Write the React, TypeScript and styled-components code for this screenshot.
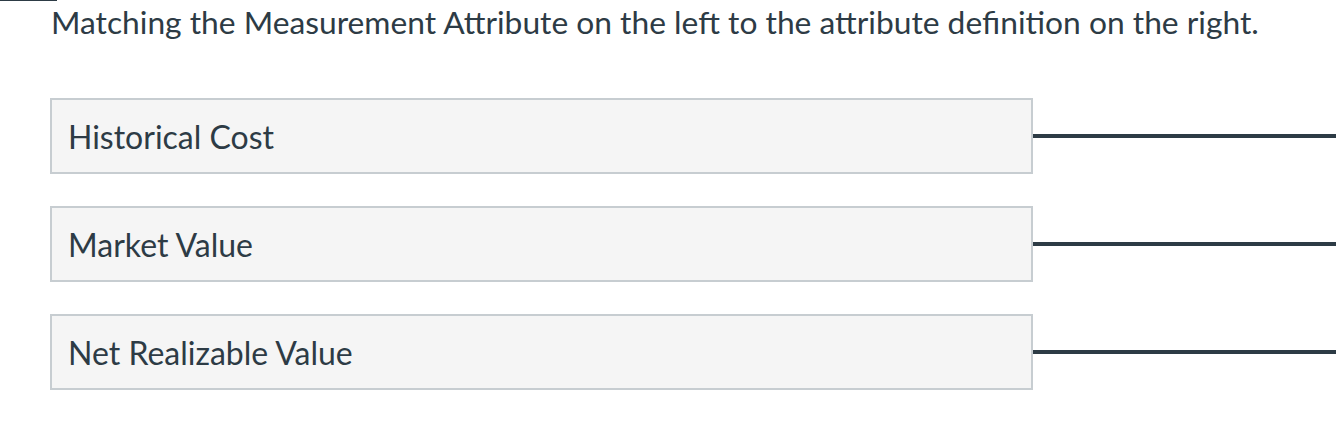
import React from "react";
import styled, { createGlobalStyle } from "styled-components";

const GlobalStyle = createGlobalStyle`
  body {
    margin: 0;
    background: #ffffff;
    font-family: Lato, "Liberation Sans", sans-serif;
    color: #2d3b45;
  }
`;

const Page = styled.div`
  width: 1336px;
  height: 434px;
  overflow: hidden;
`;

const TopRule = styled.div`
  width: 57px;
  height: 1px;
  background: #2d3b45;
`;

const Question = styled.h2`
  margin: 0;
  padding: 3px 0 0 51px;
  font-size: 31.75px;
  font-weight: 400;
  line-height: 36px;
  white-space: nowrap;
`;

const Matches = styled.div`
  display: flex;
  flex-direction: column;
  gap: 32px;
  padding: 58px 0 0 50px;
`;

const Row = styled.div`
  display: flex;
  align-items: center;
`;

const Answer = styled.div`
  box-sizing: border-box;
  width: 983px;
  height: 76px;
  display: flex;
  align-items: center;
  padding-left: 16px;
  background: #f5f5f5;
  border: 2px solid #c7cdd1;
  font-size: 32px;
`;

const Connector = styled.div`
  flex: 1;
  height: 4px;
  background: #2d3b45;
`;

const items = ["Historical Cost", "Market Value", "Net Realizable Value"];

export default function App() {
  return (
    <Page>
      <GlobalStyle />
      <TopRule />
      <Question>
        Matching the Measurement Attribute on the left to the attribute
        definition on the right.
      </Question>
      <Matches>
        {items.map((label) => (
          <Row key={label}>
            <Answer>{label}</Answer>
            <Connector />
          </Row>
        ))}
      </Matches>
    </Page>
  );
}
